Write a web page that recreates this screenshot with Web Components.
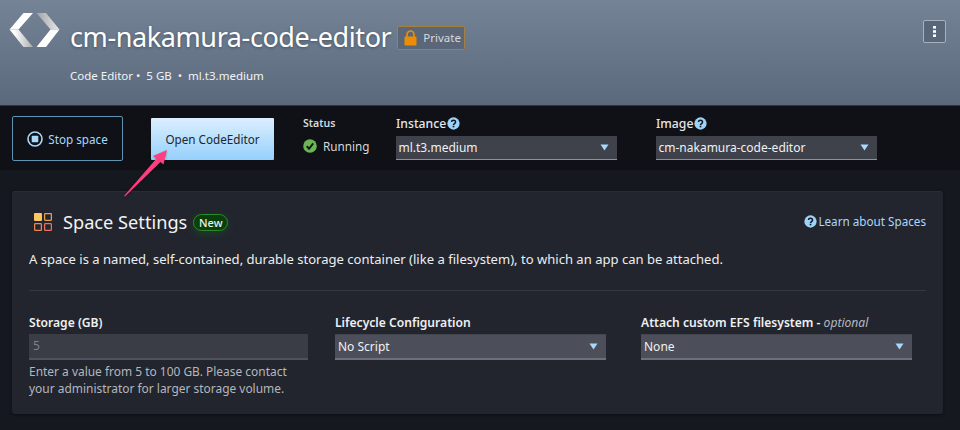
<!DOCTYPE html>
<html><head><meta charset="utf-8"><style>
html,body{margin:0;padding:0;background:#16181f}
body{width:960px;height:430px;overflow:hidden;position:relative;font-family:"Noto Sans","Open Sans",sans-serif;color:#e9ebed}
</style></head><body>
<app-root></app-root>
<script>
const help=(s=14)=>`<svg width="${s}" height="${s}" viewBox="0 0 14 14" style="flex:none;display:block"><circle cx="7" cy="7" r="6.600" fill="#9bd3fb"/><path d="M4.800 5.400C4.900 4.200 5.800 3.500 7 3.500c1.300 0 2.200.8 2.200 1.900 0 1.700-2.200 1.600-2.200 3.200" fill="none" stroke="#14161c" stroke-width="1.600"/><rect x="6.100" y="9.400" width="1.800" height="1.700" fill="#14161c"/></svg>`;
function def(name,css,html){customElements.define(name,class extends HTMLElement{constructor(){super();this.attachShadow({mode:'open'}).innerHTML=`<style>${css}</style>`+html;}});}

def('ui-select',`:host{display:flex;align-items:center;justify-content:space-between;box-sizing:border-box;height:24px;background:#3f414b;border-bottom:1px solid #8d919b;padding:0 8px 1px 2.500px;font-size:12px;color:#f0f1f3}
:host([tall]){height:26px;background:#4c4e59;border-top:1px solid #44464f;border-bottom:2px solid #6d707b;padding-left:3px}
svg{flex:none;display:block}`,`<slot></slot><svg width="9" height="7" viewBox="0 0 9 7"><path d="M.5 .5h8L4.500 6.500z" fill="#a8d8fb"/></svg>`);

def('app-header',`:host{display:flex;box-sizing:border-box;height:106px;background:linear-gradient(180deg,#748396 0%,#5a697b 100%);border-bottom:1px solid #2d3542;padding:12px 24px 0 9px;gap:10px;position:relative}
.col{display:flex;flex-direction:column;flex:1}
.top{display:flex;align-items:center;gap:6px;margin-top:6px;height:38px}
h1{margin:0;font-weight:400;font-size:27px;line-height:38px;color:#fff;text-shadow:0 1px 3px rgba(30,40,50,.45);letter-spacing:-.4px;white-space:nowrap}
.badge{display:flex;align-items:center;gap:6px;box-sizing:border-box;height:24px;width:68px;padding-left:6px;border:1px solid #a57f3f;border-radius:2px;background:#5b6778;font-size:11.500px;color:#d5d9de;margin-top:1px}
.sub{display:flex;font-size:11.500px;color:#f2f4f6;margin-top:12px;line-height:16px;white-space:pre}
.menu{position:absolute;left:923px;top:20px;width:23px;height:23px;box-sizing:border-box;border:1px solid #a9b2bc;border-radius:2px;background:#596879;display:flex;align-items:center;justify-content:center}
.logo{flex:none;display:block}`,`
<svg class="logo" width="51" height="36" viewBox="0 0 50 36"><defs><linearGradient id="a" x1="0" x2="1" y1="0" y2="0"><stop offset=".2" stop-color="#fff"/><stop offset="1" stop-color="#a8abad"/></linearGradient><linearGradient id="c" x1="0" x2="1" y1="0" y2="0"><stop offset="0" stop-color="#a0a3a6"/><stop offset="1" stop-color="#e8e8e8"/></linearGradient></defs>
<path d="M0 17.500L14 1h9.500L9 17.500z" fill="#fff"/><path d="M0 17.500h9L23.500 35H14z" fill="url(#a)"/>
<path d="M27 1h9.500L50 17.500h-9z" fill="url(#c)"/><path d="M41 17.500h9L36.500 35H27z" fill="#fff"/></svg>
<div class="col"><div class="top"><h1>cm-nakamura-code-editor</h1><span class="badge"><svg width="13" height="16" viewBox="0 0 13 16"><path d="M3 7V4.500a3.500 3.500 0 0 1 7 0V7" fill="none" stroke="#ec8d05" stroke-width="1.700"/><rect x=".5" y="6.500" width="12" height="9" rx="1" fill="#ec8d05"/></svg>Private</span></div>
<div class="sub"><span>Code Editor •  5 GB  •  ml.t3.medium</span></div></div>
<div class="menu"><svg width="3" height="11" viewBox="0 0 3 11"><rect width="3" height="2.600" fill="#fff"/><rect y="4.200" width="3" height="2.600" fill="#fff"/><rect y="8.400" width="3" height="2.600" fill="#fff"/></svg></div>`);

def('tool-bar',`:host{display:flex;box-sizing:border-box;height:64px;background:#0f1116;padding-left:12px;position:relative}
.stop{display:flex;align-items:center;justify-content:center;gap:5px;box-sizing:border-box;width:111px;height:45px;margin-top:10px;border:1px solid #5f93b2;border-radius:2px;color:#a9d8fa;font-size:11.700px;flex:none}
.open{display:flex;align-items:center;justify-content:center;width:123px;height:42px;margin:12px 0 0 28px;background:linear-gradient(180deg,#dcefff 0%,#95d0fb 100%);color:#20262e;font-size:11.700px;flex:none;border-radius:1px}
.status{margin:10px 0 0 29px;width:93px;flex:none}
.lab{font-size:10.500px;font-weight:600;color:#d5d8dc;line-height:15px}
.run{display:flex;align-items:center;gap:6px;font-size:11.700px;color:#d5d8dc;margin-top:7px;line-height:16px}
.f{flex:none;margin-top:10px}
.l{display:flex;align-items:center;gap:1px;font-size:12.200px;font-weight:500;color:#e4e6e9;line-height:15px;height:15px;margin-bottom:5px}
ui-select{width:221px}
.gap{margin-left:39px}`,`
<div class="stop"><svg width="16" height="16" viewBox="0 0 16 16"><circle cx="8" cy="8" r="7" fill="none" stroke="#a9d8fa" stroke-width="1.600"/><rect x="4.700" y="4.700" width="6.600" height="6.600" rx=".8" fill="#a9d8fa"/></svg>Stop space</div>
<div class="open">Open CodeEditor</div>
<div class="status"><div class="lab">Status</div><div class="run"><svg width="14" height="14" viewBox="0 0 14 14"><circle cx="7" cy="7" r="6.800" fill="#6bb653"/><path d="M3.700 7.200L6 9.800 10.200 4.300" fill="none" stroke="#12151a" stroke-width="1.900"/></svg>Running</div></div>
<div class="f"><div class="l">Instance${help(13)}</div><ui-select>ml.t3.medium</ui-select></div>
<div class="f gap"><div class="l">Image${help(13)}</div><ui-select>cm-nakamura-code-editor</ui-select></div>`);

def('space-card',`:host{display:block;box-sizing:border-box;width:931px;height:223px;margin:21px 0 0 12px;background:#22252e;border-radius:3px;padding:0 17px;box-shadow:0 1px 3px rgba(0,0,0,.4);border-top:1px solid #2a2d36}
.head{display:flex;align-items:center;height:18px;margin-top:21px;padding-left:5px}
h2{margin:0 0 0 11px;font-weight:400;font-size:18.200px;color:#f2f3f5;line-height:24px;white-space:nowrap}
.new{display:flex;align-items:center;justify-content:center;box-sizing:border-box;width:35px;height:17px;margin-left:6px;border:1px solid #2c8a2c;border-radius:9px;background:#0c3d0c;color:#e4f2e4;font-size:11px;font-weight:500;box-shadow:0 3px 8px rgba(20,110,30,.35)}
.learn{margin:-2px 0 0 auto;display:flex;align-items:center;gap:1px;color:#a9d8fa;font-size:11.700px}
p{margin:18px 0 0;font-size:13.050px;line-height:20px;color:#eceef0;white-space:nowrap}
hr{border:0;border-top:1px solid #353842;margin:21px 0 0}
.grid{display:grid;grid-template-columns:306px 306px 271px;margin-top:24px}
.lab{font-size:12.100px;font-weight:600;line-height:16px;color:#eef0f2;margin-bottom:3px;white-space:nowrap}
.lab i{font-weight:400;color:#b6b9c0}
.cell{width:271px}
.input{box-sizing:border-box;width:279px;height:26px;background:#3a3c46;border-bottom:2px solid #4f515c;color:#7e818b;font-size:12px;padding:3px 4px 0;line-height:18px}
.help{font-size:11.950px;line-height:17px;color:#b4b7bd;margin-top:3px;white-space:nowrap}`,`
<div class="head"><svg width="18" height="18" viewBox="0 0 18 18"><rect x="0" y="0" width="8" height="8" rx="1" fill="#fdc563"/><g fill="none" stroke-width="1.300"><rect x="10.600" y=".6" width="6.800" height="6.800" rx=".8" stroke="#ee9b4a"/><rect x=".6" y="10.600" width="6.800" height="6.800" rx=".8" stroke="#e8874f"/><rect x="10.600" y="10.600" width="6.800" height="6.800" rx=".8" stroke="#ea6f5c"/></g></svg>
<h2>Space Settings</h2><span class="new">New</span><span class="learn">${help(13)}Learn about Spaces</span></div>
<p>A space is a named, self-contained, durable storage container (like a filesystem), to which an app can be attached.</p>
<hr>
<div class="grid"><div><div class="lab">Storage (GB)</div><div class="input">5</div><div class="help">Enter a value from 5 to 100 GB. Please contact<br>your administrator for larger storage volume.</div></div>
<div class="cell"><div class="lab">Lifecycle Configuration</div><ui-select tall>No Script</ui-select></div>
<div class="cell"><div class="lab">Attach custom EFS filesystem - <i>optional</i></div><ui-select tall>None</ui-select></div></div>`);

def('app-root',`:host{display:block;position:relative;width:960px;height:430px}
.arrow{position:absolute;left:120px;top:145px;pointer-events:none;filter:drop-shadow(0 1px 1px rgba(0,0,0,.3))}`,`
<app-header></app-header><tool-bar></tool-bar><space-card></space-card>
<svg class="arrow" width="50" height="55" viewBox="0 0 50 55"><path d="M4 51L36.500 13.500l-3.500-2.500L47 5 43.500 19.500 40.500 17 5 51.500z" fill="#ff3d80"/></svg>`);
</script></body></html>
